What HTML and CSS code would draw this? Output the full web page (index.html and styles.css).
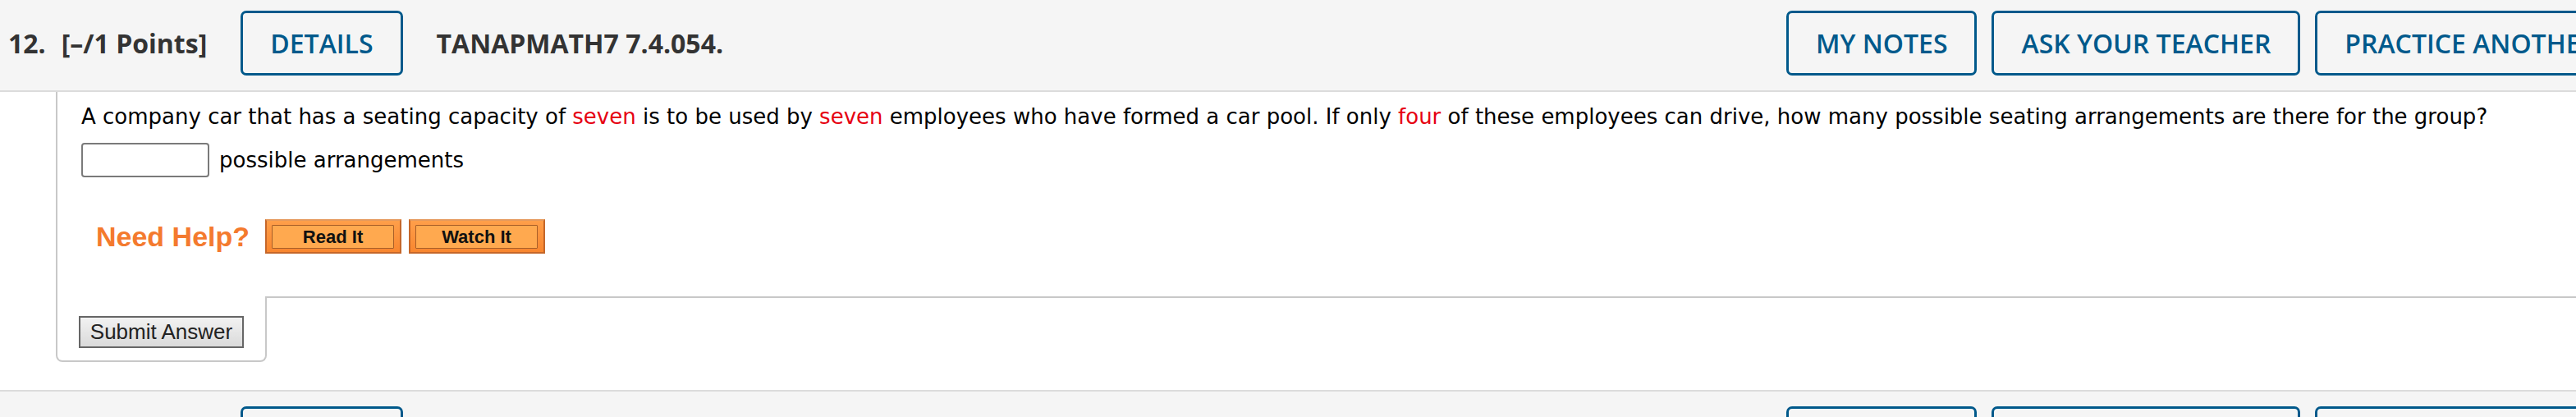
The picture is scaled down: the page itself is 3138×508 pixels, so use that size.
FILE: index.html
```html
<!DOCTYPE html>
<html lang="en">
<head>
<meta charset="utf-8">
<title>Question 12</title>
<link rel="stylesheet" href="styles.css">
</head>
<body>
<div class="page">
  <header class="q-header q-header--first">
    <div class="q-header__left">
      <span class="q-num">12.</span>
      <span class="q-points">[–/1 Points]</span>
      <button class="q-btn">DETAILS</button>
      <span class="q-code">TANAPMATH7 7.4.054.</span>
    </div>
    <div class="q-header__right">
      <button class="q-btn">MY NOTES</button>
      <button class="q-btn">ASK YOUR TEACHER</button>
      <button class="q-btn">PRACTICE ANOTHER</button>
    </div>
  </header>

  <section class="q-body">
    <div class="q-content">
      <p class="q-text">A company car that has a seating capacity of <span class="red">seven</span> is to be used by <span class="red">seven</span> employees who have formed a car pool. If only <span class="red">four</span> of these employees can drive, how many possible seating arrangements are there for the group?</p>
      <div class="q-answer">
        <input class="q-input" type="text" aria-label="answer">
        <span>possible arrangements</span>
      </div>
      <div class="q-help">
        <span class="q-help__label">Need Help?</span>
        <button class="help-btn"><span class="help-btn__inner">Read It</span></button>
        <button class="help-btn"><span class="help-btn__inner">Watch It</span></button>
      </div>
    </div>
    <div class="q-footer">
      <div class="q-tab">
        <button class="submit-btn">Submit Answer</button>
      </div>
      <div class="q-footer__rest"></div>
    </div>
  </section>

  <header class="q-header">
    <div class="q-header__left">
      <span class="q-num">13.</span>
      <span class="q-points">[–/1 Points]</span>
      <button class="q-btn">DETAILS</button>
    </div>
    <div class="q-header__right">
      <button class="q-btn">MY NOTES</button>
      <button class="q-btn">ASK YOUR TEACHER</button>
      <button class="q-btn">PRACTICE ANOTHER</button>
    </div>
  </header>
</div>
</body>
</html>
```

FILE: styles.css
```css
html, body {
  margin: 0;
  padding: 0;
  background: #ffffff;
  overflow: hidden;
}

.page {
  width: 3210px;
}

/* ---------- header bar ---------- */
.q-header {
  display: flex;
  align-items: center;
  justify-content: space-between;
  background: #f5f5f5;
  padding: 18px 10px;
  border-bottom: 2px solid #dcdcdc;
  font-family: "Open Sans", "Liberation Sans", sans-serif;
  color: #333333;
}

.q-header--first {
  padding-top: 13px;
}

.q-header__left {
  display: flex;
  align-items: center;
  gap: 41px;
}

.q-header__right {
  display: flex;
  align-items: center;
  gap: 18px;
}

.q-num {
  font-size: 32px;
  font-weight: 700;
  margin-right: -22px;
}

.q-points,
.q-code {
  font-size: 32px;
  font-weight: 700;
  white-space: nowrap;
}

.q-btn {
  box-sizing: border-box;
  height: 79px;
  padding: 0 33px;
  border: 3px solid #00598b;
  border-radius: 7px;
  background: #f5f5f5;
  color: #00598b;
  font-family: "Open Sans", "Liberation Sans", sans-serif;
  font-size: 32px;
  font-weight: 600;
  white-space: nowrap;
  cursor: pointer;
}

/* ---------- question body ---------- */
.q-body {
  padding-bottom: 34px;
  border-bottom: 2px solid #dcdcdc;
  font-family: "DejaVu Sans", Verdana, sans-serif;
  font-size: 26px;
  color: #000000;
}

.q-content {
  margin-left: 68px;
  border-left: 2px solid #c8c8c8;
  padding: 14px 0 52px 29px;
}

.q-text {
  margin: 0 0 16px 0;
  line-height: 32px;
  white-space: nowrap;
}

.red {
  color: #e60012;
}

.q-answer {
  display: flex;
  align-items: center;
  gap: 12px;
}

.q-input {
  box-sizing: border-box;
  width: 156px;
  height: 42px;
  margin: 0;
  border: 2px solid #7a7a7a;
  border-radius: 4px;
  background: #ffffff;
}

.q-help {
  display: flex;
  align-items: center;
  margin-top: 51px;
  padding-left: 18px;
  gap: 9px;
}

.q-help__label {
  font-family: "Liberation Sans", Arial, sans-serif;
  font-weight: 700;
  font-size: 34px;
  color: #f47a2e;
  margin-right: 10px;
}

.help-btn {
  box-sizing: border-box;
  width: 166px;
  height: 42px;
  padding: 5px 7px 4px 6px;
  border: 2px solid #c5672a;
  border-top-color: #e59a5d;
  background: linear-gradient(#ff9f4a, #f8862f);
  cursor: pointer;
  display: flex;
}

.help-btn__inner {
  flex: 1;
  display: flex;
  align-items: center;
  justify-content: center;
  border: 1px solid #a85e28;
  border-radius: 1px;
  background: #ffa94f;
  font-family: "Liberation Sans", Arial, sans-serif;
  font-weight: 700;
  font-size: 22px;
  color: #111111;
}

/* ---------- footer tab ---------- */
.q-footer {
  display: flex;
}

.q-tab {
  box-sizing: border-box;
  width: 257px;
  margin-left: 68px;
  padding: 24px 0 15px 26px;
  border: 2px solid #c8c8c8;
  border-top: none;
  border-radius: 0 0 8px 8px;
}

.q-footer__rest {
  flex: 1;
  border-top: 2px solid #c8c8c8;
}

.submit-btn {
  box-sizing: border-box;
  width: 201px;
  height: 39px;
  margin: 0;
  padding: 0;
  border: 2px solid #666666;
  background: linear-gradient(#f2f2f2, #dadada);
  font-family: "Liberation Sans", Arial, sans-serif;
  font-size: 26px;
  color: #222222;
  cursor: pointer;
}
```
